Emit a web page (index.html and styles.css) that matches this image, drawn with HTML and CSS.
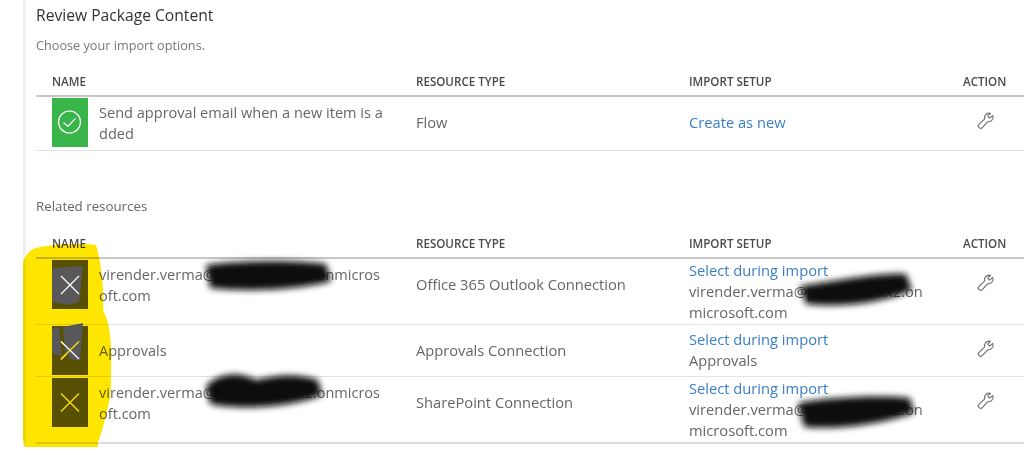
FILE: index.html
```html
<!DOCTYPE html>
<html lang="en">
<head>
<meta charset="utf-8">
<title>Review Package Content</title>
<link rel="stylesheet" href="styles.css">
</head>
<body>
<svg width="0" height="0" class="defs">
  <defs>
    <symbol id="wrench" viewBox="0 0 18 18">
      <path d="M1.6 12.9 L7.7 6.8 C7 4 8.9 1.2 12.3 1.1 L13.4 1.3 L10.8 4.1 L12.7 6.2 L15.8 3.4 C17 6.8 14.3 10.2 10.9 9.6 L5 15.8 C3.5 17.4 0.1 14.5 1.6 12.9 Z" fill="none" stroke="#6e6e6e" stroke-width="1.1" stroke-linejoin="round"/>
    </symbol>
    <symbol id="cross" viewBox="0 0 36 49">
      <path d="M9 15.5 L27 33.5 M27 15.5 L9 33.5" fill="none" stroke="#fff" stroke-width="1.2"/>
    </symbol>
    <filter id="rough" x="-20%" y="-40%" width="140%" height="180%">
      <feGaussianBlur stdDeviation="3"/>
    </filter>
  </defs>
</svg>
<main class="page">
  <h1 class="title">Review Package Content</h1>
  <p class="subtitle">Choose your import options.</p>

  <section class="table first">
    <div class="row head">
      <span>NAME</span><span>RESOURCE TYPE</span><span>IMPORT SETUP</span><span>ACTION</span>
    </div>
    <div class="row item plain-end">
      <div class="name">
        <span class="tile green">
          <svg viewBox="0 0 36 49" width="36" height="49"><circle cx="17.5" cy="24" r="11" fill="none" stroke="#fff" stroke-width="1.2"/><path d="M11.5 24.5 L15.8 28.5 L23.5 20.5" fill="none" stroke="#fff" stroke-width="1.2"/></svg>
        </span>
        <span>Send approval email when a new item is a<br>dded</span>
      </div>
      <div class="cell">Flow</div>
      <div class="cell"><a class="link" href="#">Create as new</a></div>
      <div class="cell act"><svg class="wrench"><use href="#wrench"/></svg></div>
    </div>
  </section>

  <h2 class="related">Related resources</h2>

  <section class="table second">
    <div class="row head">
      <span>NAME</span><span>RESOURCE TYPE</span><span>IMPORT SETUP</span><span>ACTION</span>
    </div>
    <div class="row item">
      <div class="name">
        <span class="tile gray"><svg width="36" height="49"><use href="#cross"/></svg></span>
        <span>virender.verma@pxxxxxxxxxxi2.onmicros<br>oft.com</span>
      </div>
      <div class="cell">Office 365 Outlook Connection</div>
      <div class="setup"><a class="link" href="#">Select during import</a><br>virender.verma@pxxxxxxxxxx2.on<br>microsoft.com</div>
      <div class="cell act"><svg class="wrench"><use href="#wrench"/></svg></div>
    </div>
    <div class="row item">
      <div class="name">
        <span class="tile gray"><svg width="36" height="49"><use href="#cross"/></svg></span>
        <span>Approvals</span>
      </div>
      <div class="cell">Approvals Connection</div>
      <div class="setup short"><a class="link" href="#">Select during import</a><br>Approvals</div>
      <div class="cell act"><svg class="wrench"><use href="#wrench"/></svg></div>
    </div>
    <div class="row item last">
      <div class="name">
        <span class="tile gray"><svg width="36" height="49"><use href="#cross"/></svg></span>
        <span>virender.verma@pxxxxxxxxxxi2.onmicros<br>oft.com</span>
      </div>
      <div class="cell">SharePoint Connection</div>
      <div class="setup"><a class="link" href="#">Select during import</a><br>virender.verma@pxxxxxxxxxx2.on<br>microsoft.com</div>
      <div class="cell act"><svg class="wrench"><use href="#wrench"/></svg></div>
    </div>
  </section>
</main>

<svg class="overlay highlight" viewBox="0 0 1024 455" width="1024" height="455">
  <path d="M36 248 C50 244 85 243 96 245 C101 262 104 285 103 310 C110 322 112 345 111 368 C111 385 111 395 109 402 C105 420 102 432 98 442 L98 447 L25 447 L23 440 L23 262 C26 254 30 250 36 248 Z" fill="#ffe600"/>
</svg>

<svg class="overlay" viewBox="0 0 1024 455" width="1024" height="455">
  <path d="M52 268 L83 266 L79 302 L68 305 L52 302 Z" fill="#58585a"/>
  <path d="M61 276 L79 294 M79 276 L61 294" stroke="#fff" stroke-width="1.2"/>
  <path d="M52 329 L59 327 L62 356 L52 353 Z M63 327 L83 323 L80 360 L72 360 L65 352 Z" fill="#58585a"/>
  <path d="M61 341.500 L79 359" stroke="#fff" stroke-width="1.2"/>
  <path d="M79 341.500 L61 359" stroke="#ffe600" stroke-width="1.2"/>
  <g fill="#0c0c0c" filter="url(#rough)">
    <path d="M206 265 C240 260 295 260 326 264 L331 281 C300 290 245 292 210 288 Z"/>
    <path d="M206 386 C220 372 240 372 256 380 C280 374 300 374 318 380 L322 395 C290 408 240 410 210 404 Z"/>
    <path d="M800 286 C830 282 880 272 906 274 L912 290 C885 302 845 308 806 304 Z"/>
    <path d="M798 403 C830 397 880 395 910 398 L914 413 C880 424 840 430 804 427 Z"/>
  </g>
</svg>
</body>
</html>
```
FILE: styles.css
```css
* {
  box-sizing: border-box;
}

html,
body {
  margin: 0;
  height: 455px;
  overflow: hidden;
  background: #fff;
}

body {
  position: relative;
  font-family: "Open Sans", "Liberation Sans", sans-serif;
  color: #666;
}

.defs {
  position: absolute;
}

.page {
  margin-left: 23px;
  height: 447px;
  padding: 4px 0 0 10px;
  border-left: 3px solid #f0f0f0;
}

.title {
  margin: 0;
  font-size: 15.65px;
  line-height: 22px;
  font-weight: 400;
  color: #333;
}

.subtitle {
  margin: 10px 0 0;
  font-size: 12.7px;
  line-height: 18px;
  color: #777;
}

.table.first {
  margin-top: 18px;
}

.related {
  margin: 46px 0 0;
  font-size: 13.3px;
  line-height: 18px;
  font-weight: 400;
  color: #666;
}

.table.second {
  margin-top: 19px;
}

.row {
  display: grid;
  grid-template-columns: 364px 273px 274px 1fr;
  padding-left: 16px;
}

.head {
  height: 25px;
  align-items: center;
  font-size: 11.6px;
  font-weight: 600;
  color: #4a4a4a;
  border-bottom: 2px solid #c8c8c8;
  padding-bottom: 4px;
}

.item {
  padding-top: 1px;
  padding-bottom: 1px;
  font-size: 14.7px;
  line-height: 21px;
  border-bottom: 1px solid #e2e2e2;
  color: #666;
}

.item.plain-end {
  height: 54px;
}

.item.last {
  border-bottom: 2px solid #dcdcdc;
}

.name {
  display: flex;
  align-items: center;
  gap: 11px;
  height: 49px;
  font-size: 14.55px;
  white-space: nowrap;
}

.tile {
  display: block;
  flex: none;
  width: 36px;
  height: 49px;
}

.tile svg {
  display: block;
}

.green {
  background: #39b54a;
}

.gray {
  background: #58585a;
}

.cell {
  display: flex;
  align-items: center;
  height: 49px;
  white-space: nowrap;
}

.setup {
  white-space: nowrap;
}

.setup.short {
  padding-top: 3px;
}

.link {
  color: #3a80c4;
  text-decoration: none;
}

.act {
  padding-left: 14px;
  padding-bottom: 3px;
}

.wrench {
  display: block;
  width: 18px;
  height: 18px;
}

.overlay {
  position: absolute;
  left: 0;
  top: 0;
  pointer-events: none;
}

.highlight {
  mix-blend-mode: multiply;
}
```
